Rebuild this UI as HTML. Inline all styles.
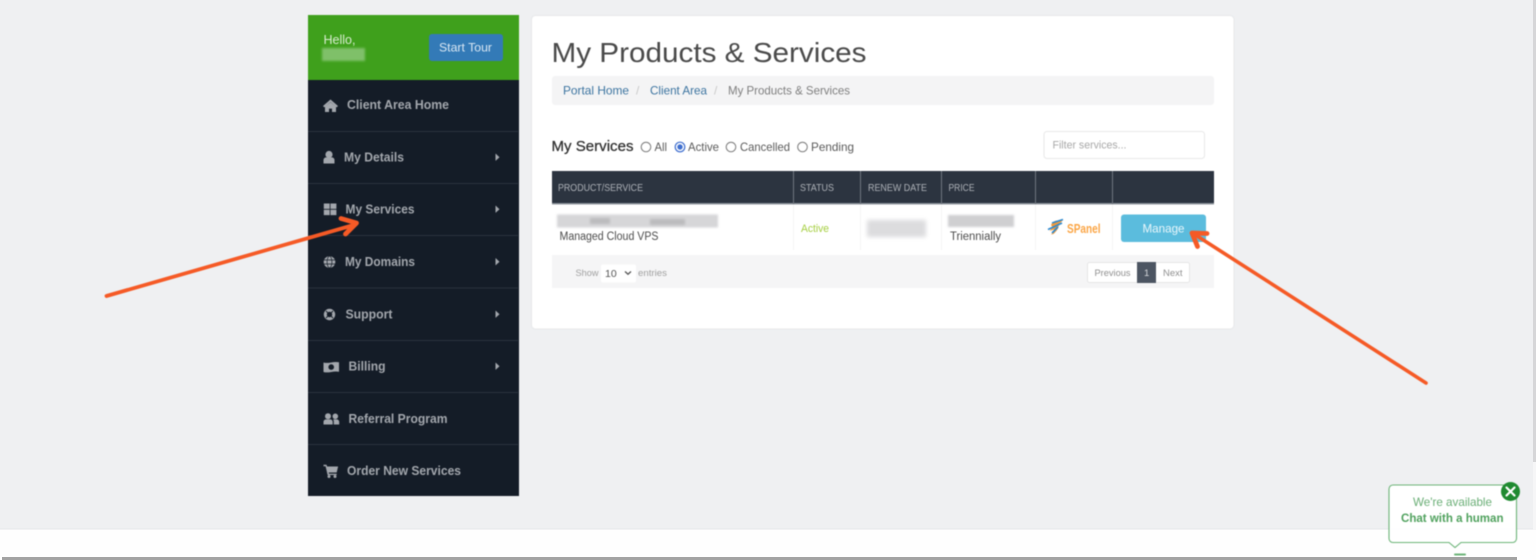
<!DOCTYPE html>
<html><head><meta charset="utf-8"><title>My Products &amp; Services</title>
<style>
html,body{margin:0;padding:0;background:#eff0f2;overflow:hidden}
svg{display:block;width:1536px;height:560px;font-family:"Liberation Sans",sans-serif}
.s{filter:blur(.45px)}
</style></head><body>
<svg xmlns="http://www.w3.org/2000/svg" width="1536" height="560" viewBox="0 0 1536 560">
<defs>
<filter id="bl1" x="-30%" y="-60%" width="160%" height="220%"><feGaussianBlur stdDeviation="2"/></filter>
<filter id="bl2" x="-30%" y="-60%" width="160%" height="220%"><feGaussianBlur stdDeviation="1"/></filter>
</defs>
<rect width="1536" height="560" fill="#eff0f2"/>
<rect x="0" y="529" width="1536" height="31" fill="#fefefe"/>
<rect x="0" y="528.500" width="1536" height="1" fill="#e6e7ea"/>
<rect x="2" y="557" width="1515" height="3" fill="#a3a3a3"/>
<rect x="1533" y="0" width="3" height="462" fill="#d6d6d8"/>
<rect x="1533" y="462" width="3" height="68" fill="#f6f6f7"/>

<g class="s">
<!-- sidebar -->
<rect x="308" y="15" width="211" height="481" fill="#141c27"/>
<rect x="308" y="15" width="211" height="65" fill="#3fa01c"/>
<text x="323.500" y="44" font-size="12.500" fill="#d8ecd0" textLength="32" lengthAdjust="spacingAndGlyphs">Hello,</text>
<rect x="322" y="48" width="43" height="13" fill="#7fc069" filter="url(#bl2)"/>
<rect x="429" y="34" width="74" height="27" rx="3" fill="#337ab7"/>
<text x="439" y="51.500" font-size="12" fill="#dbe8f4" textLength="53" lengthAdjust="spacingAndGlyphs">Start Tour</text>

<g fill="none" stroke="#2a323d" stroke-width="1">
<path d="M308 131.500H518M308 183.500H518M308 235.500H518M308 288H518M308 340.500H518M308 392.500H518M308 444.500H518"/>
</g>
<g font-size="12.500" font-weight="700" fill="#a3a7ad">
<text x="347" y="109" textLength="102" lengthAdjust="spacingAndGlyphs">Client Area Home</text>
<text x="344" y="161.500" textLength="60" lengthAdjust="spacingAndGlyphs">My Details</text>
<text x="345.500" y="213.500" textLength="69" lengthAdjust="spacingAndGlyphs">My Services</text>
<text x="345" y="266" textLength="70" lengthAdjust="spacingAndGlyphs">My Domains</text>
<text x="345.500" y="318.500" textLength="47" lengthAdjust="spacingAndGlyphs">Support</text>
<text x="348.500" y="370.500" textLength="37" lengthAdjust="spacingAndGlyphs">Billing</text>
<text x="348.500" y="423" textLength="99" lengthAdjust="spacingAndGlyphs">Referral Program</text>
<text x="347" y="475" textLength="114" lengthAdjust="spacingAndGlyphs">Order New Services</text>
</g>
<!-- carets -->
<g fill="#a3a7ad">
<path d="M495.500 153.500l4 3.700-4 3.700zM495.500 205.500l4 3.700-4 3.700zM495.500 258l4 3.700-4 3.700zM495.500 310.500l4 3.700-4 3.700zM495.500 362.500l4 3.700-4 3.700z"/>
<!-- home -->
<path d="M330.500 99.500l7.500 6.500-1.300 1.400-6.200-5.400-6.200 5.400-1.300-1.400zM325 106.800l5.500-4.500 5.500 4.500v5.200h-4v-3.400h-3v3.400h-4z"/>
<!-- user -->
<circle cx="329" cy="154.500" r="3.600"/>
<path d="M323.500 163.500v-3.400c0-1.700 1.400-2.700 2.800-2.700h5.400c1.400 0 2.800 1 2.800 2.700v3.400z"/>
<!-- grid -->
<path d="M323.800 203.500h5.900v5.400h-5.900zM330.500 203.500h5.900v5.400h-5.900zM323.800 209.700h5.900v5.400h-5.900zM330.500 209.700h5.900v5.400h-5.900z"/>
<!-- money -->
<path fill-rule="evenodd" d="M323.500 362.500c5 1.500 10-1.500 15.500-.2v9.500c-5.500-1.300-10.500 1.700-15.500.2zM331.200 364.300a2.800 2.800 0 1 0 .01 0z"/>
<!-- users -->
<circle cx="328" cy="416.300" r="3"/><circle cx="335.300" cy="416.300" r="2.800"/>
<path d="M323.500 424.500v-2.600c0-1.500 1.300-2.500 2.500-2.500h4.200c1.200 0 2.500 1 2.500 2.500v2.600zM333.800 424.500v-3c0-.8-.3-1.600-.8-2.100h3.700c1.200 0 2.500 1 2.500 2.500v2.600z"/>
<!-- cart -->
<path d="M323.500 464.800h3l.6 1.700h11l-1.400 6h-8l.3 1.200h7.700v1.300h-9.100l-2-8.800h-2.100z"/>
<circle cx="329" cy="476.500" r="1.500"/><circle cx="335" cy="476.500" r="1.500"/>
</g>
<!-- globe -->
<circle cx="329.500" cy="262" r="5.800" fill="#a3a7ad"/>
<g fill="none" stroke="#141c27" stroke-width=".7">
<ellipse cx="329.500" cy="262" rx="2.400" ry="5.800"/>
<path d="M324 260h11M324 264h11"/>
</g>
<!-- life ring -->
<circle cx="329.500" cy="314.500" r="4.200" fill="none" stroke="#a3a7ad" stroke-width="3"/>
<circle cx="329.500" cy="314.500" r="2.200" fill="#141c27"/>
<path d="M326 311l2 2M333 311l-2 2M326 318l2-2M333 318l-2-2" stroke="#141c27" stroke-width=".9"/>

<!-- card -->
<rect x="531.500" y="15.500" width="702.500" height="313.500" rx="4" fill="#fff" stroke="#e7e8ea"/>
<text x="551.500" y="62" font-size="28" fill="#4a4a4a" textLength="315" lengthAdjust="spacingAndGlyphs">My Products &amp; Services</text>
<rect x="552" y="76" width="662" height="29" rx="3" fill="#f4f4f5"/>
<g font-size="12">
<text x="563" y="94.500" fill="#3c74a0" textLength="66" lengthAdjust="spacingAndGlyphs">Portal Home</text>
<text x="636" y="94.500" fill="#c9c9c9">/</text>
<text x="650" y="94.500" fill="#3c74a0" textLength="57" lengthAdjust="spacingAndGlyphs">Client Area</text>
<text x="714" y="94.500" fill="#c9c9c9">/</text>
<text x="728" y="94.500" fill="#7f7f7f" textLength="122" lengthAdjust="spacingAndGlyphs">My Products &amp; Services</text>
</g>
<text x="551.500" y="151" font-size="14.500" fill="#2f2f2f" stroke="#2f2f2f" stroke-width=".25" textLength="82" lengthAdjust="spacingAndGlyphs">My Services</text>
<g fill="none" stroke="#7a7a7a" stroke-width="1">
<circle cx="646" cy="147" r="4.800"/><circle cx="731" cy="147" r="4.800"/><circle cx="802.500" cy="147" r="4.800"/>
</g>
<circle cx="680" cy="147" r="4.800" fill="none" stroke="#3f6fcf" stroke-width="1.200"/>
<circle cx="680" cy="147" r="2.700" fill="#3f6fcf"/>
<g font-size="12" fill="#5a5a5a">
<text x="654.500" y="151" textLength="12.500" lengthAdjust="spacingAndGlyphs">All</text>
<text x="688" y="151" textLength="31" lengthAdjust="spacingAndGlyphs">Active</text>
<text x="740" y="151" textLength="50" lengthAdjust="spacingAndGlyphs">Cancelled</text>
<text x="811" y="151" textLength="43" lengthAdjust="spacingAndGlyphs">Pending</text>
</g>
<rect x="1044" y="131.500" width="160.500" height="27" rx="3" fill="#fff" stroke="#e8e8e8"/>
<text x="1052.500" y="148.500" font-size="11" fill="#a8a8a8" textLength="74" lengthAdjust="spacingAndGlyphs">Filter services...</text>

<!-- table -->
<rect x="552" y="171" width="662" height="33" fill="#2c3440"/>
<rect x="552" y="203" width="662" height="1.500" fill="#8f959d"/>
<path d="M793.500 171v33M860.500 171v33M941.500 171v33M1035.500 171v33M1112.500 171v33" stroke="#6f767f"/>
<path d="M793.500 205v45M860.500 205v45M941.500 205v45M1035.500 205v45M1112.500 205v45" stroke="#f5f5f5"/>
<g font-size="10.500" fill="#adb1b7">
<text x="558" y="191" textLength="85" lengthAdjust="spacingAndGlyphs">PRODUCT/SERVICE</text>
<text x="800" y="191" textLength="34" lengthAdjust="spacingAndGlyphs">STATUS</text>
<text x="868" y="191" textLength="59" lengthAdjust="spacingAndGlyphs">RENEW DATE</text>
<text x="948.500" y="191" textLength="26" lengthAdjust="spacingAndGlyphs">PRICE</text>
</g>
<rect x="557" y="214.500" width="161" height="13" fill="#d6d6d8" filter="url(#bl2)"/>
<rect x="590" y="218" width="20" height="6" fill="#bcbcbe" filter="url(#bl2)"/>
<rect x="650" y="219" width="35" height="6" fill="#bcbcbe" filter="url(#bl2)"/>
<rect x="867" y="220" width="59" height="17" fill="#dcdcde" filter="url(#bl1)"/>
<rect x="948" y="215" width="66" height="12" fill="#cfcfd1" filter="url(#bl2)"/>
<text x="559.500" y="240" font-size="11.500" fill="#4c4c4c" textLength="99" lengthAdjust="spacingAndGlyphs">Managed Cloud VPS</text>
<text x="801" y="232" font-size="11" fill="#a5cf3f" textLength="28" lengthAdjust="spacingAndGlyphs">Active</text>
<text x="950" y="240" font-size="11.500" fill="#4c4c4c" textLength="51" lengthAdjust="spacingAndGlyphs">Triennially</text>
<!-- spanel logo -->
<path d="M1051 225c2-4 5-5 8-4l4-1.500c-1 2-2 3-4 4 0 3-1 6-4 9-1 1.500-3 2-4 2 2-2 3-4 3-5l-4.500 1.500c1-1.500 2-2.500 3.500-3z" fill="#f59a37"/>
<path d="M1048 229.500l14-6.500M1052 223l11-3.500M1052 233l6-6" stroke="#2b88cf" stroke-width="1.600" fill="none"/>
<text x="1067" y="233" font-size="12.500" font-weight="700" fill="#fba545" textLength="33.500" lengthAdjust="spacingAndGlyphs">SPanel</text>
<rect x="1121" y="214.500" width="85" height="27.500" rx="3" fill="#5bbcdd"/>
<text x="1142.500" y="232.500" font-size="12" fill="#e9f6fb" textLength="42" lengthAdjust="spacingAndGlyphs">Manage</text>

<!-- footer -->
<rect x="552" y="255" width="662" height="33" fill="#f5f5f6"/>
<text x="575.500" y="276" font-size="9.500" fill="#a0a0a0" textLength="23" lengthAdjust="spacingAndGlyphs">Show</text>
<rect x="601" y="264.500" width="35" height="18" rx="2" fill="#fff"/>
<text x="605" y="277" font-size="10.500" fill="#555">10</text>
<path d="M625 271.500l3 2.700 3-2.700" fill="none" stroke="#555" stroke-width="1.300"/>
<text x="638" y="276" font-size="9.500" fill="#a0a0a0" textLength="29" lengthAdjust="spacingAndGlyphs">entries</text>
<rect x="1087.500" y="262.500" width="102" height="20" rx="2" fill="#fff" stroke="#e6e6e6"/>
<rect x="1137" y="262" width="19" height="21" fill="#4c5562"/>
<text x="1094.500" y="276" font-size="9.500" fill="#8f8f8f" textLength="36" lengthAdjust="spacingAndGlyphs">Previous</text>
<text x="1144" y="276" font-size="9.500" fill="#d8dadd">1</text>
<text x="1163" y="276" font-size="9.500" fill="#8f8f8f" textLength="19.500" lengthAdjust="spacingAndGlyphs">Next</text>

<!-- arrows -->
<g fill="none" stroke="#f55a26" stroke-linecap="round" stroke-linejoin="round">
<path d="M106.500 296L352 225.500" stroke-width="3.800"/>
<path d="M341 218.500L356.500 223 345.500 234" stroke-width="4.800"/>
<path d="M1426 383L1194 234" stroke-width="3.600"/>
<path d="M1207 233.500L1192 233 1197.500 246.500" stroke-width="4.800"/>
</g>

<!-- chat bubble -->
<path d="M1393 485h119.500a4 4 0 0 1 4 4v49.500a4 4 0 0 1-4 4h-51.500l-6 5-6-5h-56a4 4 0 0 1-4-4V489a4 4 0 0 1 4-4z" fill="#fff" fill-opacity=".96" stroke="#6cb478" stroke-width="1.100"/>
<rect x="1454" y="553.500" width="12" height="2" rx="1" fill="#6cb478"/>
<text x="1413" y="506" font-size="12" fill="#6aae76" textLength="79" lengthAdjust="spacingAndGlyphs">We're available</text>
<text x="1401" y="522" font-size="12" font-weight="700" fill="#4fa15d" textLength="102.500" lengthAdjust="spacingAndGlyphs">Chat with a human</text>
<circle cx="1510.500" cy="491.500" r="9.500" fill="#1f8a30"/>
<path d="M1506.500 487.500l8 8M1514.500 487.500l-8 8" stroke="#fff" stroke-width="2.200" stroke-linecap="round"/>
</g>
</svg>
</body></html>
